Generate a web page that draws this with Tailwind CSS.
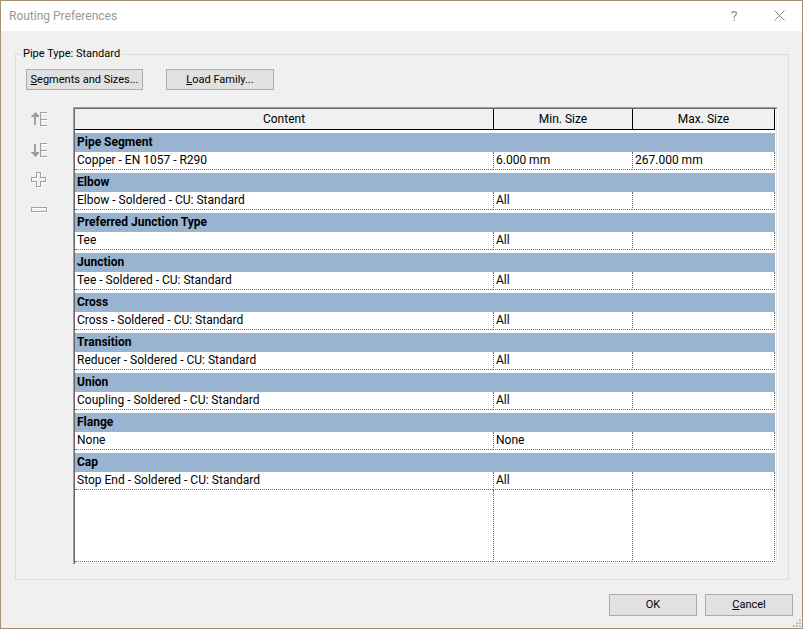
<!DOCTYPE html>
<html lang="en">
  <head>
    <meta charset="UTF-8" />
    <meta name="viewport" content="width=device-width, initial-scale=1.0" />
    <title>Routing Preferences</title>
    <script src="https://cdn.jsdelivr.net/npm/@tailwindcss/browser@4"></script>
  </head>
  <body class="relative flex min-h-screen flex-col border border-[#a39274] bg-[#f0f0f0] font-['Roboto','Noto_Sans',sans-serif] text-[12px] leading-[18px] text-black">
    <!-- Title bar -->
    <header class="flex h-[30px] shrink-0 items-center justify-between bg-white pl-2 text-[#999999]">
      <h1>Routing Preferences</h1>
      <div class="flex h-full">
        <button type="button" aria-label="Help" class="flex w-[45px] items-center justify-center">
          <svg width="7" height="10" viewBox="0 0 7 10" fill="none" stroke="#8c8c8c" stroke-width="1.2">
            <path d="M1 2.6V1.6Q1.6.6 3.2.6Q5.4.6 5.4 2.4Q5.4 3.6 4.2 4.5Q3.2 5.2 3.2 7M3.2 8.4V10" />
          </svg>
        </button>
        <button type="button" aria-label="Close" class="flex w-[45px] items-center justify-center">
          <svg width="11" height="12" viewBox="0 0 11 12" stroke="#8c8c8c">
            <path d="M.5.5l10 10M10.5.5l-10 10" />
          </svg>
        </button>
      </div>
    </header>

    <main class="flex flex-1 flex-col pt-[14px] pb-3">
      <fieldset class="mr-[13px] ml-[14px] flex-1 border border-[#dcdcdc] pt-[6px] pr-[10px] pb-[14px] pl-[10px]">
        <legend class="-ml-[5px] px-[2px] text-[11px]">Pipe Type: Standard</legend>

        <div class="flex gap-[23px] text-[11px]">
          <button type="button" class="h-[21px] w-[117px] border border-[#adadad] bg-[#e1e1e1] leading-[19px] whitespace-nowrap"><u>S</u>egments and Sizes...</button>
          <button type="button" class="h-[21px] w-[108px] border border-[#adadad] bg-[#e1e1e1] leading-[19px] whitespace-nowrap"><u>L</u>oad Family...</button>
        </div>

        <div class="mt-[17px] flex">
          <!-- Row tools -->
          <div class="flex w-[47px] shrink-0 flex-col items-start gap-[13px] pt-1 pl-[5px]">
            <button type="button" aria-label="Move row up">
              <svg width="17" height="17" viewBox="0 0 17 17" fill="none" shape-rendering="crispEdges">
                <path d="M10.5 2.5h7M10.5 9.5h7M10.5 15.5h7" stroke="#fff" />
                <path d="M16 1.5H9.5v13H16M9.5 8.5H16" stroke="#a0a0a0" />
                <path d="M3 14V6H0V5l4-4 4 4v1H5v8z" fill="#a0a0a0" />
              </svg>
            </button>
            <button type="button" aria-label="Move row down">
              <svg width="17" height="17" viewBox="0 0 17 17" fill="none" shape-rendering="crispEdges">
                <path d="M10.5 3.5h7M10.5 10.5h7M10.5 16.5h7" stroke="#fff" />
                <path d="M16 2.5H9.5v13H16M9.5 9.5H16" stroke="#a0a0a0" />
                <path d="M3 3v8H0v1l4 4 4-4v-1H5V3z" fill="#a0a0a0" />
              </svg>
            </button>
            <button type="button" aria-label="Add row">
              <svg width="17" height="17" viewBox="0 0 17 17" fill="none" shape-rendering="crispEdges">
                <path d="M6.5 2.5h4v5h5v4h-5v5h-4v-5h-5v-4h5z" stroke="#fff" />
                <path d="M5.5 1.5h4v5h5v4h-5v5h-4v-5h-5v-4h5z" stroke="#a0a0a0" />
              </svg>
            </button>
            <button type="button" aria-label="Remove row">
              <svg width="17" height="17" viewBox="0 0 17 17" fill="none" shape-rendering="crispEdges">
                <path d="M1.5 7.5h15v4h-15z" stroke="#fff" />
                <path d="M.5 6.5h15v4H.5z" stroke="#a0a0a0" />
              </svg>
            </button>
          </div>

          <!-- Preferences grid -->
          <div class="flex-1 border border-t-[#a0a0a0] border-r-white border-b-white border-l-[#a0a0a0]">
            <div class="border border-t-[#696969] border-r-[#e3e3e3] border-b-[#e3e3e3] border-l-[#696969] bg-white pr-px pb-px">
              <table class="w-full table-fixed border-separate border-spacing-0 text-left [&_td]:h-[18px] [&_td]:border-b [&_td]:border-dotted [&_td]:border-[#696969] [&_td]:p-0 [&_td]:pl-[2px] [&_td]:leading-[17px] [&_td:not(:first-child)]:border-l [&_td:last-child]:border-r [&_tbody_th]:h-[22px] [&_tbody_th]:border-t-[3px] [&_tbody_th]:border-white [&_tbody_th]:bg-[#99b4d1] [&_tbody_th]:p-0 [&_tbody_th]:pl-[2px] [&_tbody_th]:leading-[19px]">
                <thead>
                  <tr class="bg-[#f0f0f0] text-center">
                    <th scope="col" class="h-[21px] border-b border-black p-0 font-normal">Content</th>
                    <th scope="col" class="w-[139px] border-b border-l border-black p-0 font-normal">Min. Size</th>
                    <th scope="col" class="w-[143px] border-r border-b border-l border-black p-0 font-normal">Max. Size</th>
                  </tr>
                </thead>
                <tbody>
                  <tr><th colspan="3">Pipe Segment</th></tr>
                  <tr><td>Copper - EN 1057 - R290</td><td>6.000 mm</td><td>267.000 mm</td></tr>
                  <tr><th colspan="3">Elbow</th></tr>
                  <tr><td>Elbow - Soldered - CU: Standard</td><td>All</td><td></td></tr>
                  <tr><th colspan="3">Preferred Junction Type</th></tr>
                  <tr><td>Tee</td><td>All</td><td></td></tr>
                  <tr><th colspan="3">Junction</th></tr>
                  <tr><td>Tee - Soldered - CU: Standard</td><td>All</td><td></td></tr>
                  <tr><th colspan="3">Cross</th></tr>
                  <tr><td>Cross - Soldered - CU: Standard</td><td>All</td><td></td></tr>
                  <tr><th colspan="3">Transition</th></tr>
                  <tr><td>Reducer - Soldered - CU: Standard</td><td>All</td><td></td></tr>
                  <tr><th colspan="3">Union</th></tr>
                  <tr><td>Coupling - Soldered - CU: Standard</td><td>All</td><td></td></tr>
                  <tr><th colspan="3">Flange</th></tr>
                  <tr><td>None</td><td>None</td><td></td></tr>
                  <tr><th colspan="3">Cap</th></tr>
                  <tr><td>Stop End - Soldered - CU: Standard</td><td>All</td><td></td></tr>
                </tbody>
                <tfoot>
                  <tr class="h-[72px]"><td></td><td></td><td></td></tr>
                </tfoot>
              </table>
            </div>
          </div>
        </div>
      </fieldset>

      <div class="mt-[14px] mr-[9px] flex justify-end gap-2 text-[11px]">
        <button type="button" class="h-[22px] w-[88px] border border-[#adadad] bg-[#e1e1e1] leading-5">OK</button>
        <button type="button" class="h-[22px] w-[88px] border border-[#adadad] bg-[#e1e1e1] leading-5"><u>C</u>ancel</button>
      </div>
    </main>

    <!-- Resize grip -->
    <svg class="absolute right-px bottom-px" width="8" height="8" viewBox="0 0 8 8" fill="#bfbfbf">
      <path d="M6 0h2v2H6zM3 3h2v2H3zM6 3h2v2H6zM0 6h2v2H0zM3 6h2v2H3zM6 6h2v2H6z" />
    </svg>
  </body>
</html>
